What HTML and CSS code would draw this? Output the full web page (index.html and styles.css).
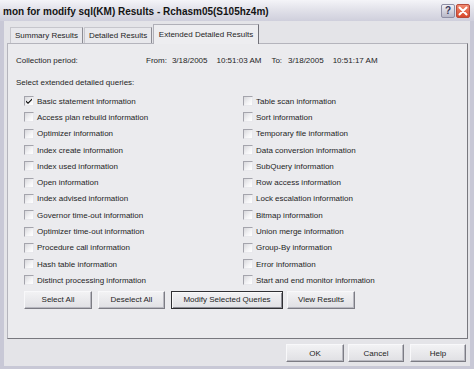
FILE: index.html
```html
<!DOCTYPE html>
<html>
<head>
<meta charset="utf-8">
<link rel="stylesheet" href="styles.css">
</head>
<body>
<div class="window">
  <div class="titlebar">
    <span class="title">mon for modify sql(KM) Results - Rchasm05(S105hz4m)</span>
    <div class="tb-buttons">
      <span class="tb-btn help">?</span>
      <span class="tb-btn close"><svg width="10" height="10" viewBox="0 0 10 10"><path d="M1.5 1.5 L8.5 8.5 M8.5 1.5 L1.5 8.5" stroke="#fff" stroke-width="2" stroke-linecap="round"/></svg></span>
    </div>
  </div>
  <div class="frame">
    <div class="tabs">
      <span class="tab t-summary">Summary Results</span>
      <span class="tab t-detailed">Detailed Results</span>
      <span class="tab active">Extended Detailed Results</span>
    </div>
    <div class="panel">
      <div class="period">
        <span class="p-label">Collection period:</span>
        <span class="p-from">From:</span>
        <span class="p-date">3/18/2005</span>
        <span class="p-time">10:51:03 AM</span>
        <span class="p-to">To:</span>
        <span class="p-date">3/18/2005</span>
        <span class="p-time">10:51:17 AM</span>
      </div>
      <div class="select-label">Select extended detailed queries:</div>
      <div class="grid">
        <label class="cb"><span class="box"><svg width="8" height="8" viewBox="0 0 8 8"><path d="M1 3.5 L3 5.5 L7 1.5 L7 3 L3 7 L1 5 Z" fill="#000"/></svg></span>Basic statement information</label>
        <label class="cb"><span class="box"></span>Table scan information</label>
        <label class="cb"><span class="box"></span>Access plan rebuild information</label>
        <label class="cb"><span class="box"></span>Sort information</label>
        <label class="cb"><span class="box"></span>Optimizer information</label>
        <label class="cb"><span class="box"></span>Temporary file information</label>
        <label class="cb"><span class="box"></span>Index create information</label>
        <label class="cb"><span class="box"></span>Data conversion information</label>
        <label class="cb"><span class="box"></span>Index used information</label>
        <label class="cb"><span class="box"></span>SubQuery information</label>
        <label class="cb"><span class="box"></span>Open information</label>
        <label class="cb"><span class="box"></span>Row access information</label>
        <label class="cb"><span class="box"></span>Index advised information</label>
        <label class="cb"><span class="box"></span>Lock escalation information</label>
        <label class="cb"><span class="box"></span>Governor time-out information</label>
        <label class="cb"><span class="box"></span>Bitmap information</label>
        <label class="cb"><span class="box"></span>Optimizer time-out information</label>
        <label class="cb"><span class="box"></span>Union merge information</label>
        <label class="cb"><span class="box"></span>Procedure call information</label>
        <label class="cb"><span class="box"></span>Group-By information</label>
        <label class="cb"><span class="box"></span>Hash table information</label>
        <label class="cb"><span class="box"></span>Error information</label>
        <label class="cb"><span class="box"></span>Distinct processing information</label>
        <label class="cb"><span class="box"></span>Start and end monitor information</label>
      </div>
      <div class="actions">
        <button class="btn w-select">Select All</button>
        <button class="btn w-deselect">Deselect All</button>
        <button class="btn w-modify focus">Modify Selected Queries</button>
        <button class="btn w-view">View Results</button>
      </div>
    </div>
    <div class="footer">
      <button class="btn w-ok">OK</button>
      <button class="btn w-cancel">Cancel</button>
      <button class="btn w-help">Help</button>
    </div>
  </div>
</div>
</body>
</html>
```
FILE: styles.css
```css
* { box-sizing: border-box; }
html, body { margin: 0; padding: 0; }
body {
  width: 474px;
  height: 369px;
  overflow: hidden;
  font-family: "Liberation Sans", Arial, sans-serif;
  font-size: 8px;
  color: #1e1e1e;
  background: #e4e4e8;
}
.window {
  width: 474px;
  height: 369px;
  display: flex;
  flex-direction: column;
  background: #c8c8d6;
}
.titlebar {
  height: 21px;
  flex: none;
  display: flex;
  align-items: center;
  justify-content: space-between;
  padding: 0 4px 0 3px;
  background: linear-gradient(#f4f4f8 0%, #e2e2ea 45%, #cfcfdc 100%);
}
.title {
  font-weight: bold;
  font-size: 10px;
  color: #141414;
  padding-top: 1px;
}
.tb-buttons { display: flex; gap: 1px; }
.tb-btn {
  width: 14px;
  height: 14px;
  border-radius: 2px;
  display: flex;
  align-items: center;
  justify-content: center;
}
.help {
  background: linear-gradient(#f0f0f6, #b8b8c8);
  border: 1px solid #8e8ea4;
  color: #3a3a5a;
  font-weight: bold;
  font-size: 10px;
}
.close {
  background: linear-gradient(#f08a70, #d8482a);
  border: 1px solid #b84a3a;
}
.frame {
  flex: 1;
  display: flex;
  flex-direction: column;
  margin: 0 4px 3px 4px;
  padding: 3px 2px 0 3px;
  background: #e4e4e8;
}
.tabs {
  display: flex;
  align-items: flex-end;
  height: 19px;
  padding-left: 3px;
  position: relative;
  z-index: 1;
}
.tab {
  height: 16px;
  display: flex;
  align-items: center;
  justify-content: center;
  white-space: nowrap;
  border: 1px solid #c6c6cc;
  border-bottom: none;
  border-right-color: #8c8c94;
  background: #e8e8ec;
  margin-right: 1px;
}
.t-summary { width: 73px; }
.t-detailed { width: 68px; }
.tab.active {
  height: 20px;
  margin-bottom: -1px;
  width: 106px;
  background: #ededf0;
  border-color: #b0b0b8;
  border-right-color: #707078;
  padding-bottom: 1px;
}
.panel {
  height: 296px;
  border: 1px solid #b4b4bc;
  border-right-color: #78787e;
  border-bottom-color: #78787e;
  background: #ebebee;
  padding: 10px 0 0 8px;
  display: flex;
  flex-direction: column;
}
.period {
  display: flex;
  height: 13px;
  align-items: center;
  white-space: nowrap;
}
.p-label { width: 130px; }
.p-from { margin-right: 5px; }
.p-time { margin-left: 9px; margin-right: 10px; }
.p-to { margin-right: 6px; }
.select-label {
  height: 13px;
  margin-top: 9px;
  display: flex;
  align-items: center;
}
.grid {
  margin-top: 4px;
  margin-left: 8px;
  display: grid;
  grid-template-columns: 219px 1fr;
  grid-auto-rows: 16.3px;
}
.cb {
  display: flex;
  align-items: center;
  gap: 3px;
  white-space: nowrap;
}
.box {
  width: 10px;
  height: 10px;
  flex: none;
  border: 1px solid #a4a4ac;
  border-right-color: #e8e8ec;
  border-bottom-color: #e8e8ec;
  background: linear-gradient(135deg, #d8d8dc 0%, #f4f4f6 60%, #ffffff 100%);
  display: flex;
  align-items: center;
  justify-content: center;
}
.actions {
  display: flex;
  margin-top: 2px;
  margin-left: 8px;
}
.btn {
  height: 18px;
  font-family: inherit;
  font-size: 8px;
  color: #1e1e1e;
  padding: 0;
  border: 1px solid #f8f8fa;
  border-right-color: #7c7c84;
  border-bottom-color: #7c7c84;
  box-shadow: inset -1px -1px 0 #b8b8c0;
  background: linear-gradient(#f2f2f4, #e0e0e4);
}
.btn.focus {
  border: 1px solid #303034;
  box-shadow: inset 1px 1px 0 #fafafa, inset -1px -1px 0 #8c8c94;
}
.w-select { width: 68px; }
.w-deselect { width: 67px; margin-left: 6px; }
.w-modify { width: 112px; margin-left: 6px; }
.w-view { width: 68px; margin-left: 4px; }
.footer {
  display: flex;
  justify-content: flex-end;
  margin-top: 5px;
  padding-right: 2px;
}
.w-ok { width: 58px; }
.w-cancel { width: 56px; margin-left: 4px; }
.w-help { width: 56px; margin-left: 6px; }
```
